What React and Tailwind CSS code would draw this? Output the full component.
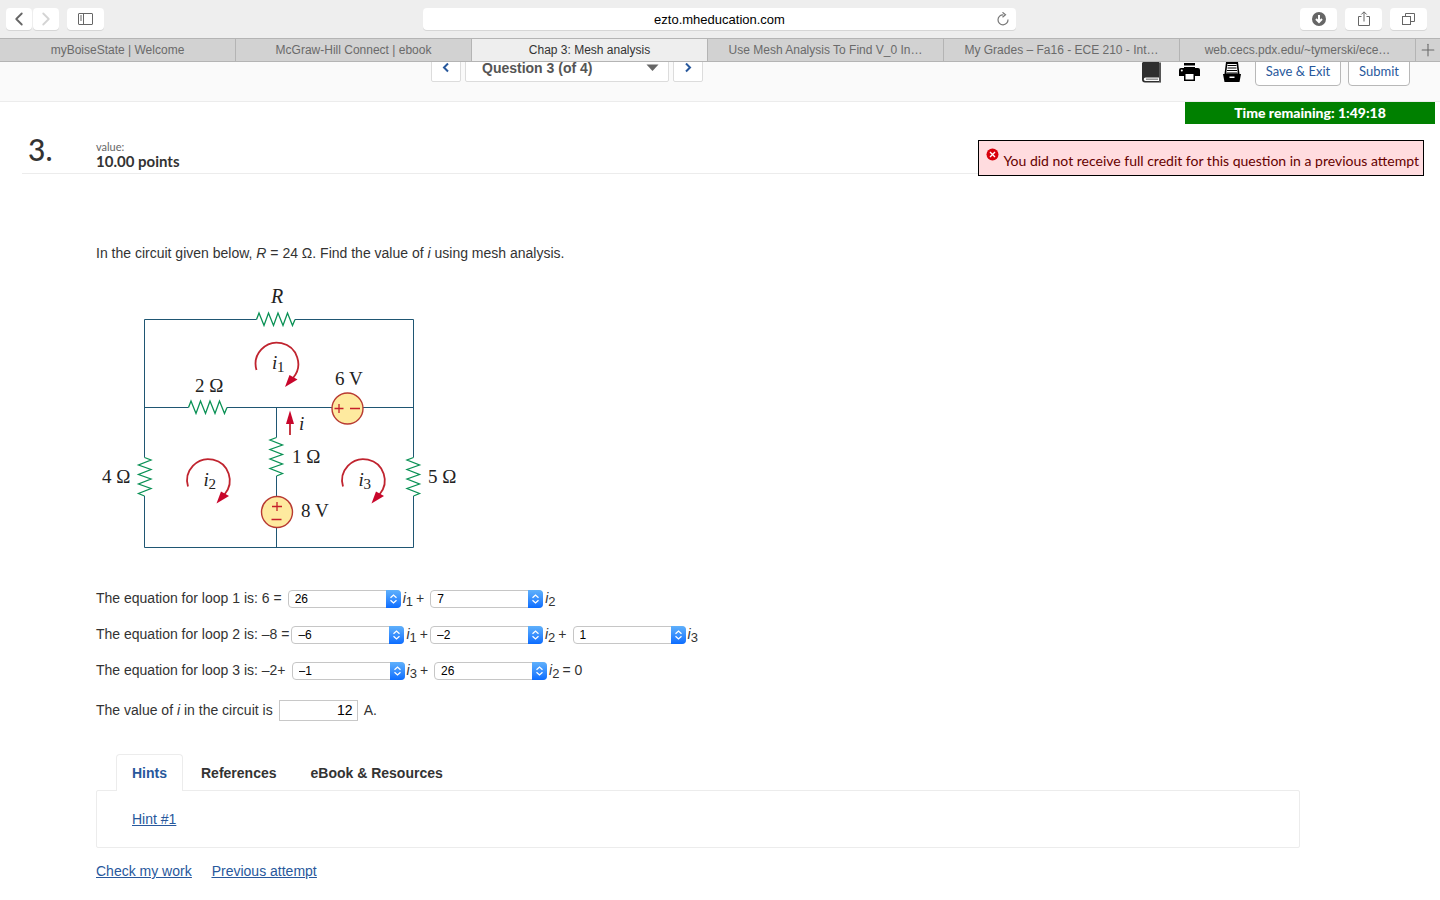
import React from "react";
import { ChevronLeft, ChevronRight, Plus } from "lucide-react";

const browserTabs = [
  "myBoiseState | Welcome",
  "McGraw-Hill Connect | ebook",
  "Chap 3: Mesh analysis",
  "Use Mesh Analysis To Find V_0 In…",
  "My Grades – Fa16 - ECE 210 - Int…",
  "web.cecs.pdx.edu/~tymerski/ece…",
];

const ToolbarButton = ({ label, className, children }) => (
  <button
    aria-label={label}
    className={`flex h-[22px] items-center justify-center rounded bg-white text-[#666] shadow-[0_1px_0_#d6d6d6] ${className}`}
  >
    {children}
  </button>
);

const BrowserToolbar = () => (
  <div className="flex h-[38px] items-center bg-[#eeeeee] pl-1.5 pr-[13px]">
    <div className="flex flex-1 items-center">
      <ToolbarButton label="Back" className="w-[26px]">
        <ChevronLeft className="h-[22px] w-[22px]" strokeWidth={2} />
      </ToolbarButton>
      <ToolbarButton label="Forward" className="ml-px w-[26px]">
        <ChevronRight className="h-[22px] w-[22px] text-[#d4d4d4]" strokeWidth={2} />
      </ToolbarButton>
      <ToolbarButton label="Show sidebar" className="ml-2 w-[37px]">
        <svg width="16" height="12" viewBox="0 0 16 12" fill="none" stroke="currentColor">
          <rect x="0.5" y="0.5" width="14" height="11" rx="0.5" />
          <path d="M5.5 0.5v11M2 3h2M2 5h2M2 7h2" />
        </svg>
      </ToolbarButton>
    </div>
    <div className="relative ml-1.5 w-5/12">
      <input
        aria-label="Address"
        defaultValue="ezto.mheducation.com"
        className="block h-[22px] w-full rounded bg-white text-center text-[13px] text-black shadow-[0_1px_0_#d6d6d6]"
      />
      <button aria-label="Reload" className="absolute right-1.5 top-1 text-[#777]">
        <svg className="block" width="14" height="14" viewBox="0 0 14 14" fill="none" stroke="currentColor" strokeWidth="1.2">
          <path d="M7.3 2.800A5 5 0 1 0 12 7.500" />
          <path d="M6.500 0.300 9.500 2.800 6.500 5.300" />
        </svg>
      </button>
    </div>
    <div className="flex flex-1 justify-end gap-2">
      <ToolbarButton label="Downloads" className="w-[37px]">
        <svg width="14" height="14" viewBox="0 0 14 14">
          <circle cx="7" cy="7" r="7" fill="#666" />
          <path d="M7 3v6M4 7l3 3 3-3" fill="none" stroke="#fff" strokeWidth="2" />
        </svg>
      </ToolbarButton>
      <ToolbarButton label="Share" className="w-[37px]">
        <svg width="12" height="16" viewBox="0 0 12 16" fill="none" stroke="currentColor">
          <path d="M3.5 5.5h-3v9h11v-9h-3M6 10.5V1M3.3 3.5 6 0.8l2.7 2.7" />
        </svg>
      </ToolbarButton>
      <ToolbarButton label="Show all tabs" className="w-[37px]">
        <svg width="13" height="13" viewBox="0 0 13 13" fill="none" stroke="currentColor">
          <rect x="0.5" y="3.5" width="8" height="8" />
          <path d="M3.5 3.5v-3h9v8h-4" />
        </svg>
      </ToolbarButton>
    </div>
  </div>
);

const BrowserTabs = () => (
  <div className="flex h-6 border-y border-[#b4b4b4] bg-[#d2d2d2] text-[12px] text-[#6a6a6a]">
    {browserTabs.map((tab, i) => (
      <button
        key={tab}
        className={
          i === 2
            ? "flex-1 border-r border-[#b4b4b4] bg-[#eeeeee] text-[#333]"
            : "flex-1 border-r border-[#b4b4b4]"
        }
      >
        {tab}
      </button>
    ))}
    <button aria-label="New tab" className="flex w-6 items-center justify-center">
      <Plus className="h-5 w-5" strokeWidth={1.3} />
    </button>
  </div>
);

const QuestionBar = () => (
  <header className="flex h-10 items-end justify-between overflow-hidden border-b border-[#ececec] bg-[#fafafa] pl-[431px] pr-[30px]">
    <div className="flex gap-1 pb-[19px]">
      <button
        aria-label="Previous question"
        className="flex h-7 w-[30px] items-center justify-center rounded-xs border border-[#dcdcdc] bg-white text-[#28589c]"
      >
        <svg width="8" height="10" viewBox="0 0 8 10" fill="none" stroke="currentColor" strokeWidth="2">
          <path d="M6 0.500 2 4.500l4 4" />
        </svg>
      </button>
      <div className="relative">
        <select
          aria-label="Question"
          className="block h-7 w-[204px] appearance-none rounded-xs border border-[#dcdcdc] bg-white pl-4 text-[14px] font-bold text-[#555]"
        >
          <option>Question 3 (of 4)</option>
        </select>
        <svg className="pointer-events-none absolute right-2.5 top-2.5" width="13" height="8" viewBox="0 0 13 8">
          <path d="M0.5 0.5h12L6.5 7z" fill="#666" />
        </svg>
      </div>
      <button
        aria-label="Next question"
        className="flex h-7 w-[30px] items-center justify-center rounded-xs border border-[#dcdcdc] bg-white text-[#28589c]"
      >
        <svg width="8" height="10" viewBox="0 0 8 10" fill="none" stroke="currentColor" strokeWidth="2">
          <path d="M2 0.500 6 4.500 2 8.500" />
        </svg>
      </button>
    </div>
    <div className="flex items-center pb-[15px] font-[Lato,sans-serif] text-[13px] text-[#28589c]">
      <button aria-label="eBook" className="mr-[18px]">
        <svg width="19" height="22" viewBox="0 0 19 22">
          <path d="M2 0h15v16.500H3.500a1.500 1.500 0 0 0 0 3.500H19v1.500H3a3 3 0 0 1-3-3V2z" fill="#2f2f2f" />
          <path d="M17 1.500h2V21h-2z" fill="#555" />
          <path d="M4 17.500h12v1.500H4z" fill="#999" />
        </svg>
      </button>
      <button aria-label="Print" className="mr-[23px]">
        <svg width="21" height="18" viewBox="0 0 21 18">
          <path d="M5 0h11v2.500H5zM2 5h3V4h11v1h3a2 2 0 0 1 2 2v6h-5v5H5v-5H0V7a2 2 0 0 1 2-2z" fill="#000" />
          <path d="M6.500 11h8v5.500h-8z" fill="#fff" />
          <circle cx="2.800" cy="7.500" r="1" fill="#fff" />
        </svg>
      </button>
      <button aria-label="Report" className="mr-3.5">
        <svg width="18" height="22" viewBox="0 0 18 22">
          <path d="M3 1h12l1.500 12h1.500l-1.500 8h-15L0 13h1.500z" fill="#000" />
          <path d="M4.400 3h9.200l1.200 9.500H3.200z" fill="#fff" />
          <path d="M4.500 4.500h9M4.500 7h9M4 9.500h10M3.500 12h11" stroke="#000" />
          <path d="M6.500 15.500h5v1.500h-5z" fill="#fff" />
        </svg>
      </button>
      <button className="mr-[7px] h-7 w-[86px] rounded border border-[#b8b8b8] bg-white">
        Save &amp; Exit
      </button>
      <button className="h-7 w-[62px] rounded border border-[#b8b8b8] bg-white">Submit</button>
    </div>
  </header>
);

const QuestionHeading = () => (
  <div className="flex items-start pl-[22px] pr-4 font-[Lato,sans-serif]">
    <div className="flex h-[50px] flex-1 border-b border-[#ececec]">
      <h1 className="w-[74px] pl-1.5 pt-[5px] text-[30px] font-medium leading-10 text-[#333]">3.</h1>
      <div className="pt-4 text-[#333]">
        <p className="text-[11px] leading-[14px] text-[#666]">value:</p>
        <p className="text-[15px] font-bold leading-[14px]">10.00 points</p>
      </div>
    </div>
    <div
      role="alert"
      className="mt-4 flex h-9 items-start gap-1 border border-black bg-[#ffdcdf] pl-[7px] pr-1 text-[#600]"
    >
      <svg className="mt-[7px] shrink-0" width="13" height="13" viewBox="0 0 13 13">
        <circle cx="6.500" cy="6.500" r="6" fill="#d8000c" />
        <path d="m4 4 5 5M9 4 4 9" stroke="#fff" strokeWidth="1.400" />
      </svg>
      <p className="mt-2.5 whitespace-nowrap text-[14px] leading-5">
        You did not receive full credit for this question in a previous attempt
      </p>
    </div>
  </div>
);

// Zigzag drawn from (0,0) to (39,0)
const Resistor = ({ transform }) => (
  <path
    d="M0 0 2.500-6.500 7.500 6 12-6.500 17 6 21.500-6.500 26.500 6 31-6.500 36 6 38.500 0"
    transform={transform}
    stroke="#0a9155"
    strokeWidth="1.300"
    fill="none"
  />
);

const LoopArrow = ({ x, y, index }) => (
  <g transform={`translate(${x} ${y})`}>
    <path d="M-20.500 6A21.300 21.300 0 1 1 16 14" fill="none" stroke="#c0242f" strokeWidth="1.800" />
    <path d="M8 23 12.500 11 20.500 15.500z" fill="#c8062b" />
    <text x="-5" y="5" fontSize="19" fontStyle="italic">i</text>
    <text x="0" y="8" fontSize="15">{index}</text>
  </g>
);

const Circuit = () => (
  <svg
    className="mt-[21px] block font-['Liberation_Serif',serif]"
    width="370"
    height="270"
    viewBox="0 0 370 270"
    fill="#222"
    role="img"
    aria-label="Circuit with three mesh loops"
  >
    <path
      d="M160.500 35.500H48.500V173.500M48.500 212V263.500H317.500V212M317.500 173.500V35.500H199M48.500 123.500H92.500M131 123.500H317.500M180.500 123.500V153.500M180.500 192V263.500"
      fill="none"
      stroke="#1f5673"
    />
    <Resistor transform="translate(160.500 35.500)" />
    <Resistor transform="translate(92.500 123.500)" />
    <Resistor transform="translate(48.500 173.500) rotate(90)" />
    <Resistor transform="matrix(0 1 1 0 180.500 153.500)" />
    <Resistor transform="matrix(0 1 1 0 317.500 173.500)" />

    <g fill="#feea9f" stroke="#b83a32" strokeWidth="1.400">
      <circle cx="251.500" cy="124.500" r="15.500" />
      <circle cx="181" cy="228" r="15.500" />
    </g>
    <path
      d="M238.500 124.500h9M243 120v9M254 124.500h10M176 222.500h10M181 218v9M175.500 235.500h10"
      stroke="#c5202b"
      strokeWidth="1.300"
    />

    <path d="M194 151V138" stroke="#c0242f" strokeWidth="1.800" />
    <path d="M194 126.500 198 140h-8z" fill="#c8062b" />

    <LoopArrow x={181} y={80} index="1" />
    <LoopArrow x={112.5} y={196.5} index="2" />
    <LoopArrow x={267.5} y={196.5} index="3" />

    <g fontSize="19">
      <text x="175" y="19" fontSize="20" fontStyle="italic">R</text>
      <text x="99" y="108">2 Ω</text>
      <text x="239" y="101">6 V</text>
      <text x="203" y="146" fontStyle="italic">i</text>
      <text x="196" y="179">1 Ω</text>
      <text x="6" y="199">4 Ω</text>
      <text x="332" y="199">5 Ω</text>
      <text x="205" y="233">8 V</text>
    </g>
  </svg>
);

const Coefficient = ({ id, label, value }) => (
  <div className="relative mt-px">
    <select
      id={id}
      aria-label={label}
      className="block h-[18px] w-[113px] appearance-none rounded border border-[#c6c6c6] bg-white pl-1.5 text-[12px] leading-4 text-black"
    >
      <option>{value}</option>
    </select>
    <span className="pointer-events-none absolute inset-y-0 right-0 flex w-[15px] items-center justify-center rounded-r bg-linear-to-b from-[#5fb0fb] to-[#0a6cff]">
      <svg width="7" height="10" viewBox="0 0 7 10" fill="none" stroke="#fff" strokeWidth="1.300">
        <path d="M0.500 3.700 3.500 1l3 2.700M0.500 6.300 3.500 9l3-2.700" />
      </svg>
    </span>
  </div>
);

const Current = ({ index }) => (
  <span className="ml-0.5">
    <i>i</i>
    <span className="relative top-[3px] text-[13px]">{index}</span>
  </span>
);

const Equations = () => (
  <div className="mt-[26px]">
    <div className="flex h-9 items-center">
      <label htmlFor="l1a" className="mr-1.5">The equation for loop 1 is: 6 =</label>
      <Coefficient id="l1a" value="26" />
      <Current index="1" />
      <span className="ml-[3px] mr-1.5">+</span>
      <Coefficient label="Loop 1, second coefficient" value="7" />
      <Current index="2" />
    </div>
    <div className="flex h-9 items-center">
      <label htmlFor="l2a" className="mr-0.5">The equation for loop 2 is: –8 =</label>
      <Coefficient id="l2a" value="–6" />
      <Current index="1" />
      <span className="ml-[3px] mr-0.5">+</span>
      <Coefficient label="Loop 2, second coefficient" value="–2" />
      <Current index="2" />
      <span className="ml-[3px] mr-1.5">+</span>
      <Coefficient label="Loop 2, third coefficient" value="1" />
      <Current index="3" />
    </div>
    <div className="flex h-9 items-center">
      <label htmlFor="l3a" className="mr-1.5">The equation for loop 3 is: –2+</label>
      <Coefficient id="l3a" value="–1" />
      <Current index="3" />
      <span className="ml-[3px] mr-1.5">+</span>
      <Coefficient label="Loop 3, second coefficient" value="26" />
      <Current index="2" />
      <span className="ml-[3px]">= 0</span>
    </div>
    <div className="mt-1 flex h-9 items-center">
      <label htmlFor="answer">
        The value of <i>i</i> in the circuit is
      </label>
      <input
        id="answer"
        defaultValue="12"
        className="mx-1.5 h-[21px] w-[79px] border border-[#c8c8c8] bg-white pr-1 text-right text-black"
      />
      <span>A.</span>
    </div>
  </div>
);

const Resources = () => (
  <section className="mr-[140px] mt-[26px]">
    <div className="relative flex pl-5 font-bold">
      <button className="h-[37px] w-[67px] rounded-t border border-b-0 border-[#ececec] bg-white text-[#28589c]">
        Hints
      </button>
      <button className="ml-[18px]">References</button>
      <button className="ml-[34px]">eBook &amp; Resources</button>
    </div>
    <div className="-mt-px rounded-xs border border-[#ececec] py-[18px] pl-[35px]">
      <a href="#hint-1" className="text-[#28589c] underline">Hint #1</a>
    </div>
  </section>
);

const App = () => {
  return (
    <div className="min-h-screen bg-white font-['Liberation_Sans',Arial,sans-serif]">
      <BrowserToolbar />
      <BrowserTabs />
      <QuestionBar />
      <div className="ml-auto mr-[5px] h-[22px] w-[250px] bg-[#008000] text-center font-[Lato,sans-serif] text-[14px] font-black leading-[22px] text-white">
        Time remaining: 1:49:18
      </div>
      <QuestionHeading />
      <main className="pl-24 pt-[67px] text-[14px] leading-5 text-[#333]">
        <p>
          In the circuit given below, <i>R</i> = 24 Ω. Find the value of <i>i</i> using mesh analysis.
        </p>
        <Circuit />
        <Equations />
        <Resources />
        <nav className="mt-[13px] flex gap-5 text-[#28589c] underline">
          <a href="#check">Check my work</a>
          <a href="#previous">Previous attempt</a>
        </nav>
      </main>
    </div>
  );
};

export default App;
